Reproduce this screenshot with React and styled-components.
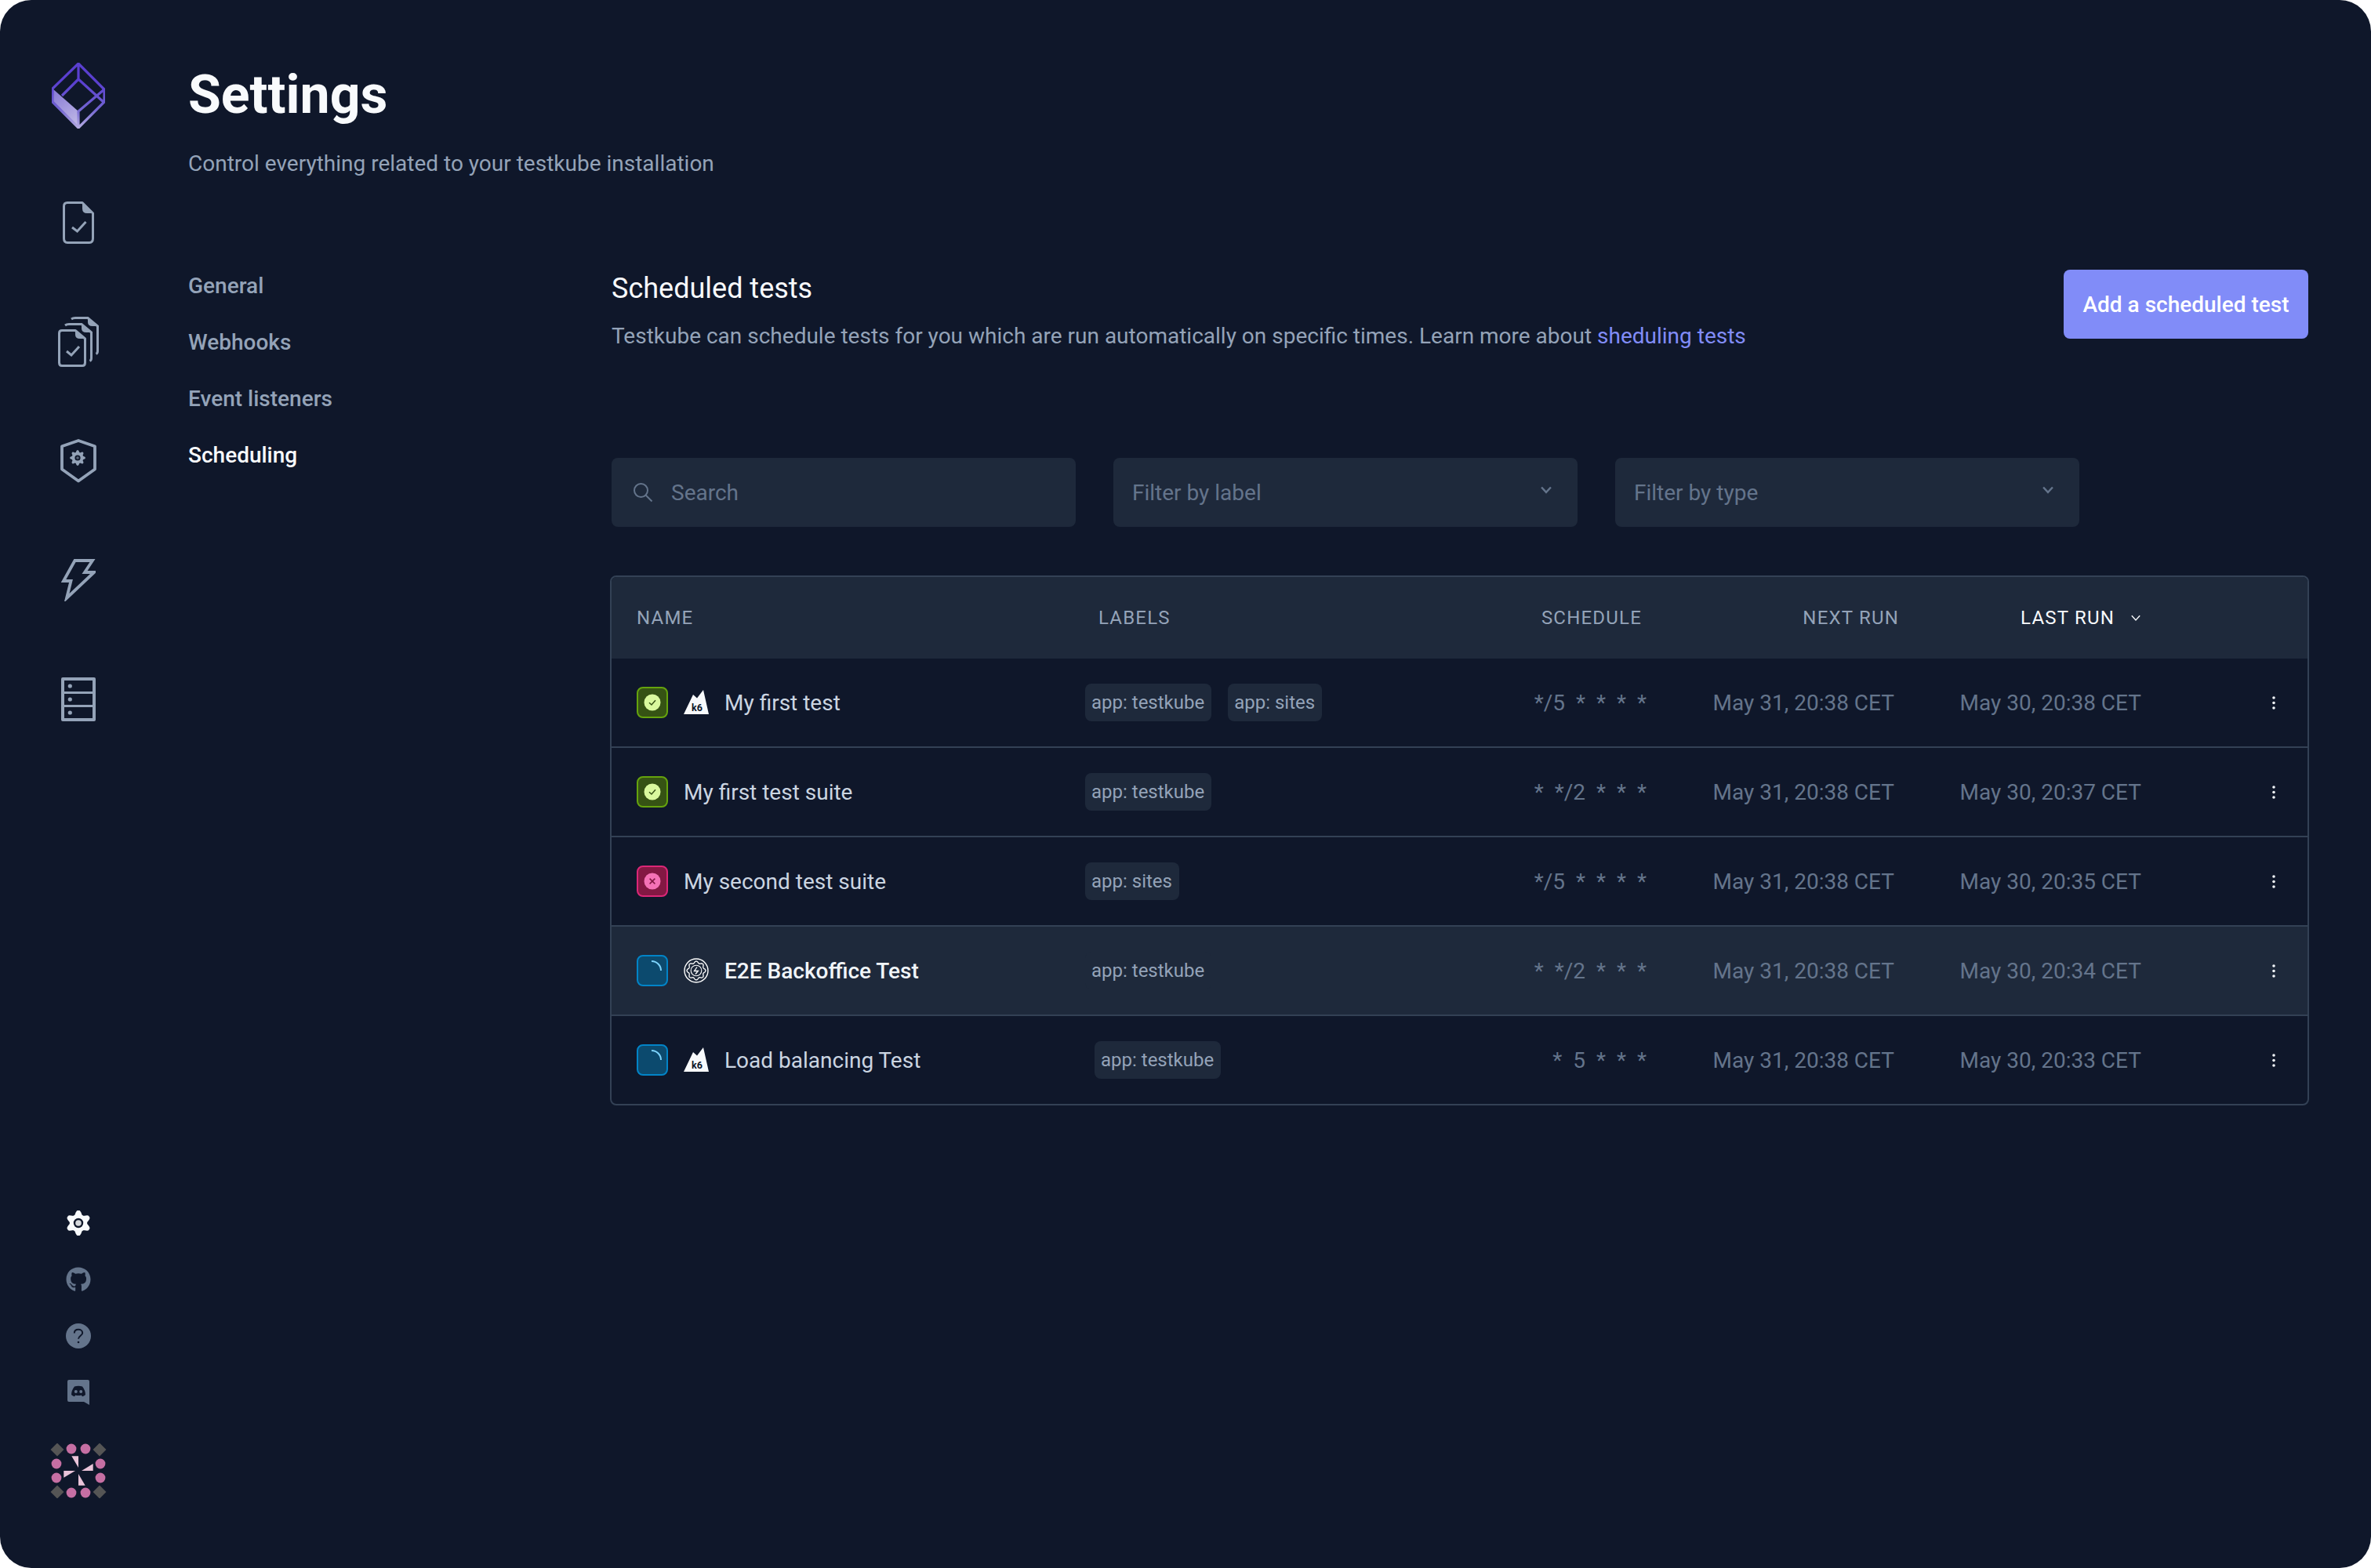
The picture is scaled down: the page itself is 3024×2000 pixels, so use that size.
import React from 'react';
import styled, { createGlobalStyle } from 'styled-components';
import { FaGithub } from 'react-icons/fa';

const GlobalStyle = createGlobalStyle`
  html, body {
    margin: 0;
    padding: 0;
    background: #ffffff;
  }
  * {
    box-sizing: border-box;
  }
`;

const Shell = styled.div`
  width: 3024px;
  height: 2000px;
  display: flex;
  background: #0f172a;
  border-radius: 40px;
  overflow: hidden;
  font-family: Roboto, "Liberation Sans", sans-serif;
`;

const Sidebar = styled.aside`
  width: 200px;
  height: 100%;
  flex-shrink: 0;
  display: flex;
  flex-direction: column;
  align-items: center;
  justify-content: space-between;
  padding: 80px 0 89px;
`;

const SideTop = styled.div`
  display: flex;
  flex-direction: column;
  align-items: center;
  gap: 44px;
`;

const SideLinks = styled.nav`
  display: flex;
  flex-direction: column;
  align-items: center;
`;

const SideLink = styled.a`
  width: 100px;
  height: 152px;
  display: flex;
  align-items: center;
  justify-content: center;
  color: #94a3b8;
`;

const SideBottom = styled.div`
  display: flex;
  flex-direction: column;
  align-items: center;
`;

const UtilLink = styled.a`
  width: 60px;
  height: 72px;
  display: flex;
  align-items: center;
  justify-content: center;
  color: ${p => (p.$active ? '#f8fafc' : '#64748b')};
`;

const OrgLogo = styled.div`
  margin-top: 29px;
  height: 70px;
`;

const Main = styled.main`
  flex: 1;
  padding: 83px 79px 0 40px;
`;

const Title = styled.h1`
  margin: 0;
  font-size: 68px;
  line-height: 76px;
  font-weight: 700;
  color: #f8fafc;
`;

const Subtitle = styled.p`
  margin: 30px 0 0;
  font-size: 28px;
  line-height: 40px;
  color: #94a3b8;
`;

const Body = styled.div`
  margin-top: 115px;
  display: flex;
`;

const SettingsNav = styled.nav`
  width: 540px;
  flex-shrink: 0;
  padding-top: 1px;
  display: flex;
  flex-direction: column;
  gap: 32px;
`;

const NavItem = styled.a`
  font-size: 28px;
  line-height: 40px;
  font-weight: 500;
  color: ${p => (p.$active ? '#f8fafc' : '#94a3b8')};
`;

const Content = styled.section`
  flex: 1;
  min-width: 0;
`;

const SectionHeader = styled.div`
  display: flex;
  align-items: flex-start;
  justify-content: space-between;
  padding-right: 1px;
`;

const SectionTitle = styled.h2`
  margin: 0;
  font-size: 36px;
  line-height: 48px;
  font-weight: 400;
  color: #f8fafc;
`;

const SectionText = styled.p`
  margin: 17px 0 0;
  font-size: 28px;
  line-height: 40px;
  color: #94a3b8;
`;

const DocLink = styled.a`
  color: #818cf8;
`;

const AddButton = styled.button`
  width: 312px;
  height: 88px;
  padding: 0;
  border: none;
  border-radius: 8px;
  background: #818cf8;
  color: #ffffff;
  font-family: inherit;
  font-size: 28px;
  font-weight: 500;
`;

const Filters = styled.div`
  margin-top: 135px;
  display: flex;
  gap: 48px;
`;

const FilterBox = styled.div`
  width: 592px;
  height: 88px;
  padding: 0 24px 0 ${p => (p.$search ? 27 : 24)}px;
  display: flex;
  align-items: center;
  justify-content: ${p => (p.$search ? 'flex-start' : 'space-between')};
  gap: 23px;
  background: #1e293b;
  border-radius: 8px;
  color: #64748b;
  font-size: 28px;
`;

const FilterCaret = styled.span`
  display: flex;
  margin: 0 8px 6px 0;
`;

const Table = styled.div`
  margin: 62px 0 0 -2px;
  border: 2px solid #334155;
  border-radius: 8px;
  overflow: hidden;
`;

const gridColumns = '572px 572px 144px 316px 315px 1fr';

const HeadRow = styled.div`
  height: 104px;
  padding-left: 32px;
  display: grid;
  grid-template-columns: ${gridColumns};
  align-items: center;
  background: #1e293b;
`;

const HeadCell = styled.div`
  justify-self: ${p => (p.$right ? 'end' : 'start')};
  display: flex;
  align-items: center;
  gap: 20px;
  padding-left: ${p => p.$pad || 0}px;
  margin-right: ${p => p.$nudge || 0}px;
  font-size: 24px;
  letter-spacing: 1.2px;
  text-transform: uppercase;
  color: ${p => (p.$sorted ? '#f8fafc' : '#94a3b8')};
`;

const Row = styled.div`
  height: 114px;
  padding-left: 32px;
  display: grid;
  grid-template-columns: ${gridColumns};
  align-items: center;
  background: ${p => (p.$hover ? '#1e293b' : 'transparent')};
  border-bottom: 2px solid #334155;
  &:last-child {
    height: 112px;
    border-bottom: none;
  }
`;

const NameCell = styled.div`
  display: flex;
  align-items: center;
`;

const Status = styled.span`
  width: 40px;
  height: 40px;
  display: flex;
  flex-shrink: 0;
  align-items: center;
  justify-content: center;
  margin-right: 20px;
  border-radius: 8px;
  border: 2px solid ${p => p.$border};
  background: ${p => p.$bg};
`;

const TypeIcon = styled.span`
  width: 32px;
  height: 32px;
  display: flex;
  flex-shrink: 0;
  margin-right: 20px;
`;

const Name = styled.span`
  padding-top: 2px;
  font-size: 28px;
  line-height: 40px;
  font-weight: ${p => (p.$hover ? 500 : 400)};
  color: ${p => (p.$hover ? '#f1f5f9' : '#cbd5e1')};
`;

const Labels = styled.div`
  display: flex;
  gap: 21px;
  padding-left: ${p => p.$shift || 0}px;
`;

const Tag = styled.span`
  height: 48px;
  padding: 0 9px 0 8px;
  display: flex;
  align-items: center;
  border-radius: 8px;
  background: #1e293b;
  color: #94a3b8;
  font-size: 24px;
`;

const Schedule = styled.div`
  justify-self: end;
  white-space: pre;
  word-spacing: 7px;
  font-size: 28px;
  color: #64748b;
`;

const DateCell = styled.div`
  justify-self: end;
  white-space: nowrap;
  font-size: 28px;
  color: #64748b;
`;

const Kebab = styled.span`
  justify-self: end;
  display: flex;
  padding-right: 41px;
`;

// wavy outline around a centre, used for the gears
const lobes = (cx, cy, r, amp, n, sharp = 1.8) => {
  const pts = [];
  for (let i = 0; i < 144; i++) {
    const t = (i / 144) * Math.PI * 2;
    const w = Math.max(-1, Math.min(1, Math.cos(n * t) * sharp));
    const rad = r + amp * w;
    pts.push(`${(cx + rad * Math.sin(t)).toFixed(2)} ${(cy - rad * Math.cos(t)).toFixed(2)}`);
  }
  return `M${pts.join('L')}Z`;
};

const ring = (cx, cy, r) => `M${cx - r} ${cy}a${r} ${r} 0 1 0 ${r * 2} 0a${r} ${r} 0 1 0 ${-r * 2} 0Z`;

const Logo = () => (
  <svg width="68" height="84" viewBox="66 80 68 84" fill="none">
    <defs>
      <linearGradient id="logoLine" x1="100" y1="80" x2="100" y2="164" gradientUnits="userSpaceOnUse">
        <stop offset="0.3" stopColor="#5a3fd0" />
        <stop offset="0.7" stopColor="#7264d2" />
        <stop offset="1" stopColor="#b9b0e4" />
      </linearGradient>
      <linearGradient id="logoFace" x1="67" y1="113" x2="100" y2="163" gradientUnits="userSpaceOnUse">
        <stop offset="0" stopColor="#8577d4" />
        <stop offset="1" stopColor="#c4bde8" />
      </linearGradient>
    </defs>
    <path d="M67 113 L100 142 V163 L67 130 Z" fill="url(#logoFace)" />
    <path
      d="M100 81 L133 114 V130 L100 163 L67 130 V113 Z M100 81 V101 M100 101 L133 131 M133 114 L100 142 V163 M100 101 L79 122"
      stroke="url(#logoLine)"
      strokeWidth="3.2"
      strokeLinejoin="round"
    />
  </svg>
);

const DocIcon = () => (
  <svg width="40" height="54" viewBox="0 0 40 54" fill="none">
    <path d="M25 1.5 H6 Q1.5 1.5 1.5 6 V47 Q1.5 52.5 6 52.5 H34 Q38.5 52.5 38.5 47 V15 Z" stroke="currentColor" strokeWidth="3" strokeLinejoin="round" />
    <path d="M25 1 L38.5 15 H31 Q25 15 25 9 Z" fill="currentColor" />
    <path d="M12 33 L18.5 38 L29.5 26" stroke="currentColor" strokeWidth="3" />
  </svg>
);

const DocsIcon = () => (
  <svg width="52" height="64" viewBox="0 0 52 64" fill="none">
    <path d="M17 3 Q19 1.5 22 1.5 H38 L50.5 12 V44 Q50.5 46.5 48.5 47.5" stroke="currentColor" strokeWidth="3" />
    <path d="M38 1.2 L50.5 12 H44 Q38 12 38 7 Z" fill="currentColor" />
    <path d="M9 11 Q11 9.5 14 9.5 H30 L42.5 20 V53 Q42.5 55.5 40.5 56.5" stroke="currentColor" strokeWidth="3" />
    <path d="M30 9.2 L42.5 20 H36 Q30 20 30 15 Z" fill="currentColor" />
    <path d="M22 17.5 H5 Q1.5 17.5 1.5 21 V58.5 Q1.5 62.5 5 62.5 H31 Q34.5 62.5 34.5 58.5 V28 Z" stroke="currentColor" strokeWidth="3" strokeLinejoin="round" />
    <path d="M22 17 L34.5 28 H28 Q22 28 22 23 Z" fill="currentColor" />
    <path d="M11 44 L17 49 L27 38" stroke="currentColor" strokeWidth="3" />
  </svg>
);

const ShieldIcon = () => (
  <svg width="46" height="56" viewBox="0 0 46 56" fill="none">
    <path d="M23 2 L44 9.2 V38.5 L23 53.5 L2 38.5 V9.2 Z" stroke="currentColor" strokeWidth="3.8" strokeLinejoin="round" />
    <path d={lobes(22, 24, 8.6, 1.2, 8, 1.3) + ring(22, 24, 3.6)} fill="currentColor" fillRule="evenodd" />
    <circle cx="22" cy="24" r="1.8" fill="currentColor" opacity="0.55" />
  </svg>
);

const BoltIcon = () => (
  <svg width="44" height="54" viewBox="0 0 44 54" fill="none">
    <path d="M17.5 2 H40 L30 17 H42 L7 50 L12.5 28 H3 Z" stroke="currentColor" strokeWidth="3.8" strokeLinejoin="miter" />
  </svg>
);

const ServerIcon = () => (
  <svg width="44" height="56" viewBox="0 0 44 56" fill="none">
    <rect x="2" y="2" width="40" height="52" stroke="currentColor" strokeWidth="4" strokeLinejoin="round" />
    <path d="M2 19.5 H42 M2 36.5 H42" stroke="currentColor" strokeWidth="3.2" />
    <circle cx="11.3" cy="11" r="2.6" fill="currentColor" />
    <circle cx="11.3" cy="28" r="2.6" fill="currentColor" />
    <circle cx="11.3" cy="45" r="2.6" fill="currentColor" />
  </svg>
);

const GearIcon = () => (
  <svg width="32" height="34" viewBox="0 0 32 34">
    <path d={lobes(16, 17, 13.6, 2.4, 6, 1.15) + ring(16, 17, 6.2)} fill="currentColor" fillRule="evenodd" />
    <circle cx="16" cy="17" r="3.8" fill="currentColor" opacity="0.85" />
  </svg>
);

const HelpIcon = () => (
  <svg width="32" height="32" viewBox="0 0 32 32" fill="none">
    <circle cx="16" cy="16" r="16" fill="currentColor" />
    <path d="M10.8 12.4 C10.8 9.4 13 7.8 16 7.8 C19 7.8 21.2 9.6 21.2 12.2 C21.2 15.6 16 16 16 19.8" stroke="#0f172a" strokeWidth="2" />
    <circle cx="16" cy="24" r="1.3" fill="#0f172a" />
  </svg>
);

const DiscordIcon = () => (
  <svg width="28" height="32" viewBox="0 0 28 32">
    <path d="M2 0 H26 Q28 0 28 2 V32 L21 28 H2 Q0 28 0 26 V2 Q0 0 2 0 Z" fill="currentColor" />
    <path d="M9 8.4 Q14 7 19 8.4 Q23 13.5 23 19 Q21 21 19 21.2 L17.8 19.4 Q14 20.6 10.2 19.4 L9 21.2 Q7 21 5 19 Q5 13.5 9 8.4 Z" fill="#0f172a" />
    <circle cx="10.8" cy="15" r="2" fill="currentColor" />
    <circle cx="17.2" cy="15" r="2" fill="currentColor" />
  </svg>
);

const KubeshopLogo = () => (
  <svg width="72" height="70" viewBox="64 1841 72 70">
    {[[73, 1849], [127, 1849], [73, 1903], [127, 1903]].map(([x, y]) => (
      <path key={`${x}${y}`} d={`M${x} ${y - 8.5} L${x + 8.5} ${y} L${x} ${y + 8.5} L${x - 8.5} ${y} Z`} fill="#555555" />
    ))}
    {[[91, 1848], [109, 1848], [72, 1867], [72, 1885], [128, 1867], [128, 1885], [91, 1904], [109, 1904]].map(([x, y]) => (
      <circle key={`${x}${y}`} cx={x} cy={y} r="6.4" fill="#c56fa3" />
    ))}
    <path d="M91.3 1857.3 H100 V1872 Z M118.7 1867 V1876 H104 Z M81.3 1876 H96 L81.3 1884.7 Z M100 1880 L108.7 1894.7 H100 Z" fill="#eac4d9" />
  </svg>
);

const StatusGlyph = ({ status }) => {
  if (status === 'running') {
    return (
      <svg width="36" height="36" viewBox="0 0 36 36" fill="none">
        <path d="M17 6 A12 12 0 0 1 29 18" stroke="#7dd3fc" strokeWidth="2" />
      </svg>
    );
  }
  const ok = status === 'passed';
  return (
    <svg width="22" height="22" viewBox="0 0 22 22" fill="none">
      <circle cx="11" cy="11" r="10.5" fill={ok ? '#d9f99d' : '#f472b6'} />
      {ok ? (
        <path d="M7 11.2 L10 14 L15 8.2" stroke="#365314" strokeWidth="1.5" />
      ) : (
        <path d="M7.6 7.6 L14.4 14.4 M14.4 7.6 L7.6 14.4" stroke="#831843" strokeWidth="1.5" />
      )}
    </svg>
  );
};

const statusColors = {
  passed: { $bg: '#365314', $border: '#65a30d' },
  failed: { $bg: '#831843', $border: '#db2777' },
  running: { $bg: '#0c4a6e', $border: '#0284c7' },
};

const K6Icon = () => (
  <svg width="32" height="32" viewBox="0 0 32 32">
    <path d="M0 31 L12 6 L17 10.5 L25 0 L32 31 Z" fill="#f8fafc" />
    <text x="17" y="26.5" textAnchor="middle" fontFamily="Roboto, sans-serif" fontSize="12.5" fontWeight="700" fill="#0f172a">k6</text>
  </svg>
);

const CurlIcon = () => (
  <svg width="32" height="32" viewBox="0 0 32 32" fill="none" stroke="#ffffff">
    <circle cx="16" cy="16" r="15" strokeWidth="1.4" />
    <path d={lobes(16, 16, 10.8, 1.1, 8, 1.1)} strokeWidth="1.3" />
    <path d={ring(16, 16, 6.8)} strokeWidth="1.1" />
    <path d="M17 11.5 L13.5 16.5 H18.4 L15 20.5" strokeWidth="1.3" />
  </svg>
);

const rows = [
  { status: 'passed', type: 'k6', name: 'My first test', labels: ['app: testkube', 'app: sites'], schedule: '*/5 * * * *', next: 'May 31, 20:38 CET', last: 'May 30, 20:38 CET' },
  { status: 'passed', name: 'My first test suite', labels: ['app: testkube'], schedule: '* */2 * * *', next: 'May 31, 20:38 CET', last: 'May 30, 20:37 CET' },
  { status: 'failed', name: 'My second test suite', labels: ['app: sites'], schedule: '*/5 * * * *', next: 'May 31, 20:38 CET', last: 'May 30, 20:35 CET' },
  { status: 'running', type: 'curl', hover: true, name: 'E2E Backoffice Test', labels: ['app: testkube'], schedule: '* */2 * * *', next: 'May 31, 20:38 CET', last: 'May 30, 20:34 CET' },
  { status: 'running', type: 'k6', name: 'Load balancing Test', labels: ['app: testkube'], shift: 12, schedule: '* 5 * * *', next: 'May 31, 20:38 CET', last: 'May 30, 20:33 CET' },
];

const Chevron = ({ size = 16, color = '#64748b', width = 2.4 }) => (
  <svg width={size} height={size * 0.62} viewBox="0 0 16 10" fill="none">
    <path d="M2 1.5 L8 8 L14 1.5" stroke={color} strokeWidth={width} />
  </svg>
);

const App = () => (
  <>
    <GlobalStyle />
    <Shell>
      <Sidebar>
        <SideTop>
          <Logo />
          <SideLinks>
            <SideLink><DocIcon /></SideLink>
            <SideLink><DocsIcon /></SideLink>
            <SideLink><ShieldIcon /></SideLink>
            <SideLink><BoltIcon /></SideLink>
            <SideLink><ServerIcon /></SideLink>
          </SideLinks>
        </SideTop>
        <SideBottom>
          <UtilLink $active><GearIcon /></UtilLink>
          <UtilLink><FaGithub size={32} /></UtilLink>
          <UtilLink><HelpIcon /></UtilLink>
          <UtilLink><DiscordIcon /></UtilLink>
          <OrgLogo><KubeshopLogo /></OrgLogo>
        </SideBottom>
      </Sidebar>

      <Main>
        <Title>Settings</Title>
        <Subtitle>Control everything related to your testkube installation</Subtitle>
        <Body>
          <SettingsNav>
            <NavItem>General</NavItem>
            <NavItem>Webhooks</NavItem>
            <NavItem>Event listeners</NavItem>
            <NavItem $active>Scheduling</NavItem>
          </SettingsNav>
          <Content>
            <SectionHeader>
              <div>
                <SectionTitle>Scheduled tests</SectionTitle>
                <SectionText>
                  Testkube can schedule tests for you which are run automatically on specific times. Learn more about <DocLink>sheduling tests</DocLink>
                </SectionText>
              </div>
              <AddButton>Add a scheduled test</AddButton>
            </SectionHeader>

            <Filters>
              <FilterBox $search>
                <svg width="26" height="26" viewBox="0 0 26 26" fill="none" stroke="#64748b" strokeWidth="2">
                  <circle cx="10.5" cy="10.5" r="8.5" />
                  <path d="M16.5 16.5 L24.5 24.5" />
                </svg>
                <span>Search</span>
              </FilterBox>
              <FilterBox>
                <span>Filter by label</span>
                <FilterCaret><Chevron /></FilterCaret>
              </FilterBox>
              <FilterBox>
                <span>Filter by type</span>
                <FilterCaret><Chevron /></FilterCaret>
              </FilterBox>
            </Filters>

            <Table>
              <HeadRow>
                <HeadCell>Name</HeadCell>
                <HeadCell $pad={17}>Labels</HeadCell>
                <HeadCell $right $nudge={6}>Schedule</HeadCell>
                <HeadCell $right $nudge={-6}>Next run</HeadCell>
                <HeadCell $right $sorted>
                  Last run
                  <Chevron size={14} color="#f8fafc" width={1.6} />
                </HeadCell>
              </HeadRow>
              {rows.map(row => (
                <Row key={row.name} $hover={row.hover}>
                  <NameCell>
                    <Status {...statusColors[row.status]}><StatusGlyph status={row.status} /></Status>
                    {row.type === 'k6' && <TypeIcon><K6Icon /></TypeIcon>}
                    {row.type === 'curl' && <TypeIcon><CurlIcon /></TypeIcon>}
                    <Name $hover={row.hover}>{row.name}</Name>
                  </NameCell>
                  <Labels $shift={row.shift}>
                    {row.labels.map(l => <Tag key={l}>{l}</Tag>)}
                  </Labels>
                  <Schedule>{row.schedule}</Schedule>
                  <DateCell>{row.next}</DateCell>
                  <DateCell>{row.last}</DateCell>
                  <Kebab>
                    <svg width="4" height="17" viewBox="0 0 4 17" fill="#f1f5f9">
                      <circle cx="2" cy="2" r="1.8" />
                      <circle cx="2" cy="8.5" r="1.8" />
                      <circle cx="2" cy="15" r="1.8" />
                    </svg>
                  </Kebab>
                </Row>
              ))}
            </Table>
          </Content>
        </Body>
      </Main>
    </Shell>
  </>
);

export default App;
